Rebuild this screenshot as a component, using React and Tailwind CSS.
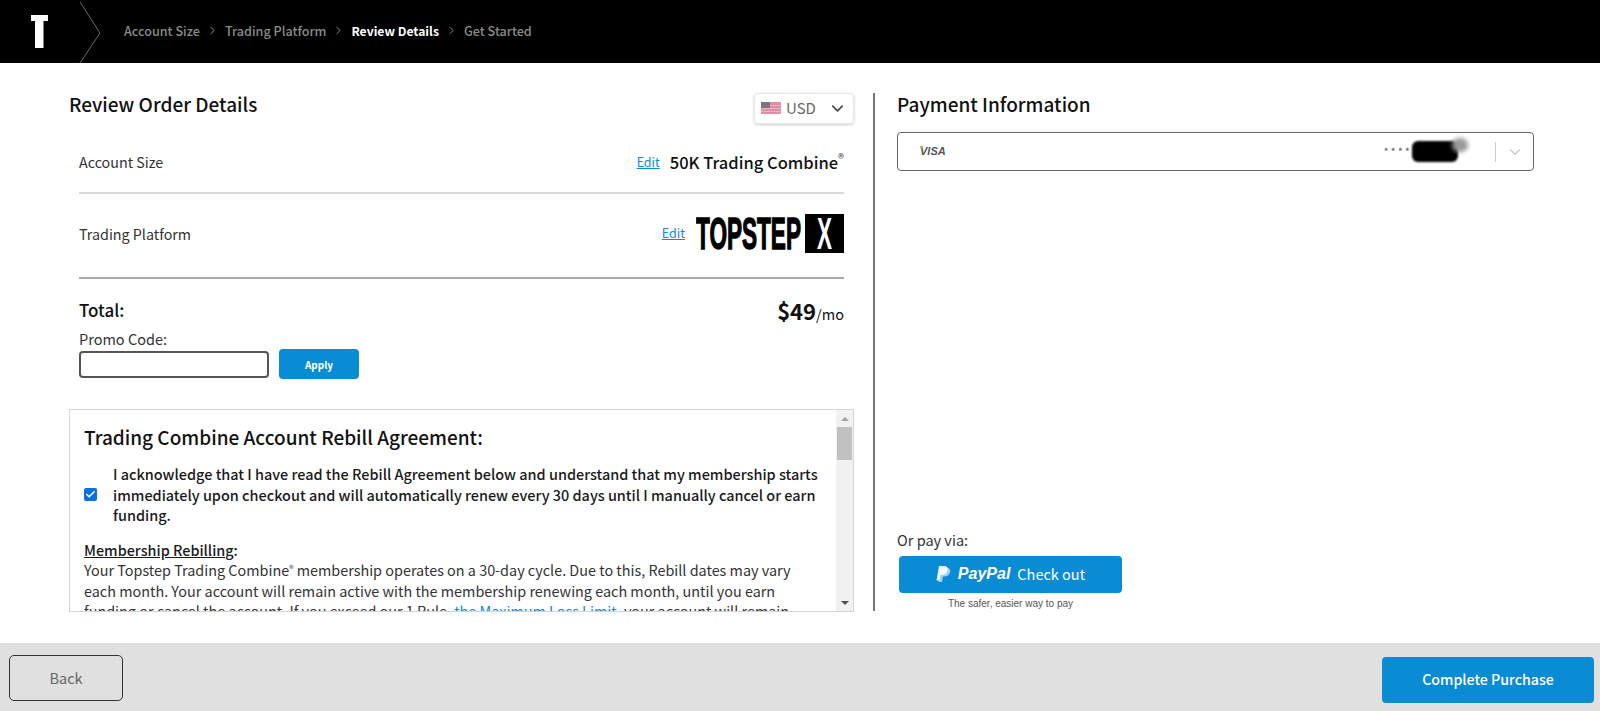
import { ChevronDown, ChevronRight, Check } from 'lucide-react'

const FONT = "font-['Noto_Sans_CJK_SC','Noto_Sans',sans-serif]"

function Steps() {
  const steps = [
    { label: 'Account Size' },
    { label: 'Trading Platform' },
    { label: 'Review Details', active: true },
    { label: 'Get Started' },
  ]
  return (
    <div className="flex items-center gap-[6px] text-[12.6px] leading-5 text-[#8a8a8a] pb-[2px]">
      {steps.map((s, i) => (
        <div key={s.label} className="flex items-center gap-[6px]">
          <span className={s.active ? 'font-bold text-[12.2px] text-white' : 'font-medium'}>{s.label}</span>
          {i < steps.length - 1 && <ChevronRight size={13} strokeWidth={1.5} className="text-[#a8a8a8]" />}
        </div>
      ))}
    </div>
  )
}

function Header() {
  return (
    <header className="h-[63px] bg-black flex items-center shrink-0">
      <svg width="124" height="63" viewBox="0 0 124 63" className="shrink-0">
        <rect x="31" y="15" width="17" height="6" fill="#fff" />
        <rect x="35" y="15" width="8.5" height="33" fill="#fff" />
        <path d="M80 2 L100 33 L80 63" stroke="#6a6a6a" strokeWidth="1" fill="none" />
      </svg>
      <Steps />
    </header>
  )
}

function Flag() {
  return (
    <svg width="20" height="12" viewBox="0 0 20 12" className="shrink-0">
      <rect width="20" height="12" fill="#e08fa2" />
      <rect y="3" width="20" height="1" fill="#eab6c2" />
      <rect y="6" width="20" height="1" fill="#eab6c2" />
      <rect y="9" width="20" height="1" fill="#eab6c2" />
      <rect width="9" height="6" fill="#77777f" />
    </svg>
  )
}

function TopstepLogo() {
  return (
    <svg width="148" height="39" viewBox="0 0 148 39" className="shrink-0">
      <text x="0" y="35" textLength="105" lengthAdjust="spacingAndGlyphs" fontFamily="Liberation Sans" fontWeight="700" fontSize="44" stroke="#000" strokeWidth="1.4" fill="#000">TOPSTEP</text>
      <rect x="109" y="0" width="39" height="39" fill="#000" />
      <text x="121" y="35" textLength="15" lengthAdjust="spacingAndGlyphs" fontFamily="Liberation Sans" fontWeight="700" fontSize="44" fill="#fff">X</text>
    </svg>
  )
}

function FakeScrollbar() {
  return (
    <div className="w-[17px] shrink-0 bg-[#f1f1f1] flex flex-col items-center justify-between">
      <div className="w-full flex flex-col items-center">
        <div className="h-[17px] flex items-center justify-center">
          <div className="w-0 h-0 border-x-[4px] border-x-transparent border-b-[4px] border-b-[#a3a3a3]" />
        </div>
        <div className="w-[15px] h-[33px] bg-[#c1c1c1]" />
      </div>
      <div className="h-[17px] flex items-center justify-center">
        <div className="w-0 h-0 border-x-[4px] border-x-transparent border-t-[4px] border-t-[#505050]" />
      </div>
    </div>
  )
}

function Agreement() {
  return (
    <div className="mt-[30px] h-[203px] border border-[#d4d4d4] flex overflow-hidden">
      <div className="flex-1 min-w-0 pl-[14px] pr-[4px] pt-[13px] overflow-hidden">
        <h3 className="text-[19px] leading-[27px] font-medium text-[#111]">Trading Combine Account Rebill Agreement:</h3>
        <div className="mt-[14px] flex items-center gap-[16px]">
          <div className="w-[13px] h-[13px] rounded-[2px] bg-[#0a6fe0] flex items-center justify-center shrink-0">
            <Check size={11} strokeWidth={3.5} className="text-white" />
          </div>
          <p className="text-[14.45px] leading-[20.5px] font-medium text-[#1a1a1a]">
            I acknowledge that I have read the Rebill Agreement below and understand that my membership starts immediately upon checkout and will automatically renew every 30 days until I manually cancel or earn funding.
          </p>
        </div>
        <div className="mt-[14px] pr-[16px] text-[14.4px] leading-[20.5px] text-[#333]">
          <div className="font-medium text-[#1a1a1a]"><span className="underline">Membership Rebilling</span>:</div>
          <p>
            Your Topstep Trading Combine<sup className="text-[9px]">®</sup> membership operates on a 30-day cycle. Due to this, Rebill dates may vary each month. Your account will remain active with the membership renewing each month, until you earn funding or cancel the account. If you exceed our 1 Rule, <span className="text-[#0a8cd4]">the Maximum Loss Limit</span>, your account will remain
          </p>
        </div>
      </div>
      <FakeScrollbar />
    </div>
  )
}

function OrderDetails() {
  return (
    <section className="w-[785px] ml-[69px] shrink-0 pt-[30px]">
      <div className="flex items-center justify-between h-[30px]">
        <h2 className="pb-[8px] text-[19px] font-medium text-[#111]">Review Order Details</h2>
        <button className="w-[100px] h-[31px] rounded-[4px] border border-[#e8e8e8] shadow-[0_1px_3px_rgba(0,0,0,0.2)] flex items-center pl-[6px] pr-[6px] text-[15px] text-[#666]">
          <Flag />
          <span className="ml-[5px]">USD</span>
          <ChevronDown size={19} strokeWidth={2} className="ml-auto text-[#444]" />
        </button>
      </div>

      <div className="ml-[10px] mr-[10px]">
        <div className="h-[71px] pt-[9px] flex items-center justify-between border-b-2 border-[#d9d9d9]">
          <span className="text-[14.3px] text-[#333]">Account Size</span>
          <div className="flex items-center gap-[10px]">
            <a className="text-[12.5px] text-[#0a8cd4] underline">Edit</a>
            <span className="text-[16.5px] font-medium text-[#111]">50K Trading Combine<sup className="text-[12px] text-[#555]">®</sup></span>
          </div>
        </div>
        <div className="h-[85px] pb-[4px] flex items-center justify-between border-b-2 border-[#a8a8a8]">
          <span className="text-[14.3px] text-[#333]">Trading Platform</span>
          <div className="flex items-center gap-[11px]">
            <a className="text-[12.5px] text-[#0a8cd4] underline">Edit</a>
            <TopstepLogo />
          </div>
        </div>
        <div className="mt-[19px] flex items-center justify-between h-[24px]">
          <span className="text-[17px] font-medium text-[#111]">Total:</span>
          <span className="text-[#111]"><span className="text-[22px] font-bold">$49</span><span className="text-[14.5px]">/mo</span></span>
        </div>
        <div className="mt-[7px] text-[14.5px] leading-[20px] text-[#333]">Promo Code:</div>
        <div className="flex items-center gap-[10px]">
          <div className="w-[190px] h-[27px] rounded-[4px] border-2 border-[#555] bg-white" />
          <button className="w-[80px] h-[30px] rounded-[4px] bg-[#0a8cd4] text-white text-[10px] font-bold">Apply</button>
        </div>
      </div>

      <Agreement />
    </section>
  )
}

function Payment() {
  return (
    <section className="flex-1 min-w-0 pt-[30px] pl-[22px] pr-[66px] flex flex-col">
      <h2 className="h-[30px] pb-[8px] flex items-center text-[19px] font-medium text-[#111]">Payment Information</h2>
      <div className="mt-[9px] h-[39px] rounded-[4px] border border-[#666] flex items-center pl-[22px]">
        <span className="relative text-[11px] font-bold italic text-[#555] font-['Liberation_Sans',sans-serif]">
          VISA
          <span className="absolute left-0 top-[3px] w-[3px] h-[2px] bg-[#e8a24a]" />
        </span>
        <div className="ml-auto flex items-center">
          <span className="text-[11px] tracking-[2px] text-[#666]">****</span>
          <div className="w-[46px] h-[21px] bg-black rounded-[6px] blur-[1px]" />
          <div className="w-[16px] h-[14px] -ml-[6px] -mt-[14px] bg-[#999] rounded-full blur-[2px]" />
        </div>
        <div className="ml-[27px] w-px h-[20px] bg-[#ccc]" />
        <div className="w-[37px] flex justify-center">
          <ChevronDown size={18} strokeWidth={1.5} className="text-[#c4c4c4]" />
        </div>
      </div>

      <div className="mt-auto">
        <div className="text-[14.5px] leading-[20px] text-[#333]">Or pay via:</div>
        <button className="mt-[6px] ml-[2px] w-[223px] h-[37px] rounded-[4px] bg-[#0a8cd4] flex items-center justify-center gap-[7px] text-white pb-[2px]">
          <svg width="15" height="16" viewBox="0 0 15 16">
            <path d="M4.5 1.5 H9.5 C13.5 1.5 15 4 14 6.5 C13 9.5 10.5 10.5 8 10.5 H7 L6 16 H2.5 Z" fill="#fff" fillOpacity="0.6" />
            <path d="M3 0 H8 C11.5 0 12.5 2.5 11.5 5 C10.5 8 8 9 5.5 9 H4.5 L3.5 14.5 H0.5 Z" fill="#fff" fillOpacity="0.9" />
          </svg>
          <span className="text-[16px] font-bold italic font-['Liberation_Sans',sans-serif]">PayPal</span>
          <span className="text-[14.5px]">Check out</span>
        </button>
        <div className="ml-[2px] w-[223px] mt-[4px] text-center text-[10px] leading-[14px] text-[#555] font-['Liberation_Sans',sans-serif]">The safer, easier way to pay</div>
      </div>
    </section>
  )
}

export default function App() {
  return (
    <div className={`${FONT} h-[711px] bg-white flex flex-col overflow-hidden`}>
      <Header />
      <main className="flex-1 min-h-0 flex pb-[32px]">
        <OrderDetails />
        <div className="flex-1 min-w-0 flex">
          <div className="ml-[19px] mt-[30px] w-[2px] bg-[#777] shrink-0" />
          <Payment />
        </div>
      </main>
      <footer className="h-[68px] shrink-0 bg-[#e0e0e0] flex items-center justify-between pt-[2px] pl-[9px] pr-[6px]">
        <button className="w-[114px] h-[46px] rounded-[5px] border border-[#333] text-[14.5px] text-[#666]">Back</button>
        <button className="mt-[3px] w-[212px] h-[46px] rounded-[4px] bg-[#0a8cd4] text-[14.2px] font-medium text-white">Complete Purchase</button>
      </footer>
    </div>
  )
}
